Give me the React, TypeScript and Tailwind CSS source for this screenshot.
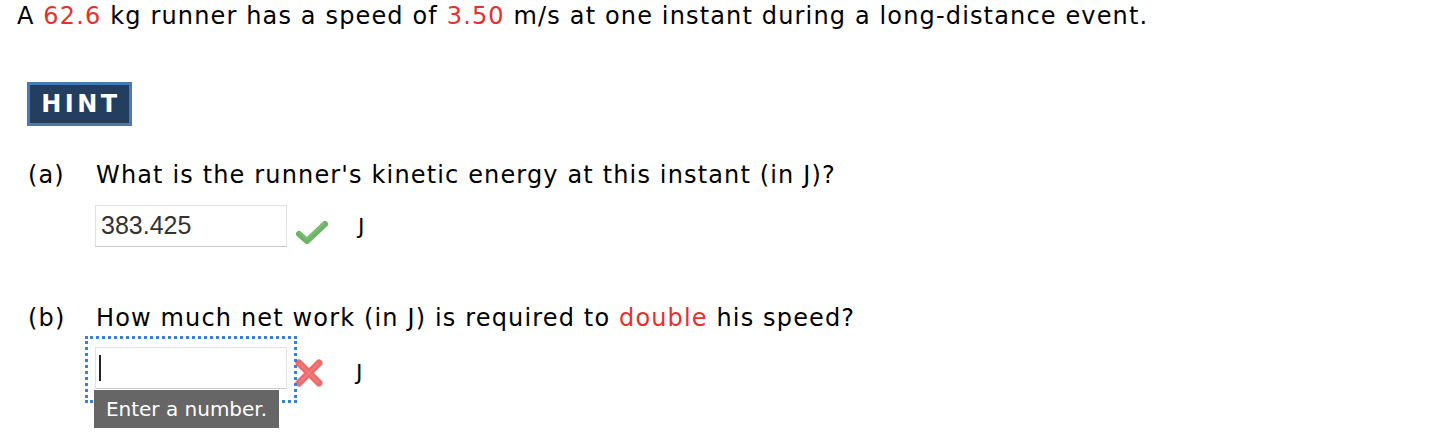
import React from "react";

const Check = () => (
  <svg width="32" height="26" viewBox="0 0 32 26">
    <path d="M3 15 L11 22 L29 5" fill="none" stroke="#6db468" strokeWidth="6" strokeLinecap="round" strokeLinejoin="round" />
    <path d="M4 14 L11 20 L28 4" fill="none" stroke="#82c57c" strokeWidth="2" strokeLinecap="round" strokeLinejoin="round" opacity="0.6" />
  </svg>
);

const Cross = () => (
  <svg width="30" height="28" viewBox="0 0 30 28">
    <path d="M5 4 L25 24 M25 4 L5 24" fill="none" stroke="#ec6b6b" strokeWidth="7" strokeLinecap="round" />
    <path d="M6 5 L24 23 M24 5 L6 23" fill="none" stroke="#f08585" strokeWidth="2" strokeLinecap="round" opacity="0.6" />
  </svg>
);

export default function App() {
  return (
    <div className="w-[1434px] h-[444px] bg-white text-black relative overflow-hidden" style={{ fontFamily: '"DejaVu Sans", Verdana, sans-serif' }}>
      <div className="pl-[17px] pt-[1px] text-[24px] leading-[30px] tracking-[1.15px]">
        A <span className="text-[#e8302a]">62.6</span> kg runner has a speed of <span className="text-[#e8302a]">3.50</span> m/s at one instant during a long-distance event.
      </div>
      <div className="pl-[27px] mt-[51px]">
        <div className="w-[105px] h-[44px] bg-[#233e5e] border-[3px] border-[#4a7ab4] flex items-center justify-center pl-[3px] text-white font-bold text-[24px] tracking-[3.5px]">
          HINT
        </div>
      </div>
      <div className="flex mt-[34px] text-[24px] leading-[30px] tracking-[1.15px]">
        <div className="w-[96px] pl-[28px]">(a)</div>
        <div>What is the runner's kinetic energy at this instant (in J)?</div>
      </div>
      <div className="flex items-center pl-[95px] mt-[15px]">
        <div className="w-[192px] h-[42px] border border-[#e2e2e2] border-b-[#c8c8c8] flex items-center pl-[5px] text-[25px] text-[#333]" style={{ fontFamily: '"Liberation Sans", Arial, sans-serif' }}>
          383.425
        </div>
        <div className="ml-[9px] mt-[12px]"><Check /></div>
        <div className="ml-[30px] text-[22px]">J</div>
      </div>
      <div className="flex mt-[56px] text-[24px] leading-[30px] tracking-[1.15px]">
        <div className="w-[96px] pl-[28px]">(b)</div>
        <div>How much net work (in J) is required to <span className="text-[#e8302a]">double</span> his speed?</div>
      </div>
      <div className="flex items-start pl-[85px] mt-[3px]">
        <div className="relative w-[212px] h-[67px] border-[3px] border-dotted border-[#3b7fdc]">
          <div className="absolute left-[7px] top-[8px] w-[192px] h-[42px] bg-white border border-[#e2e2e2] border-b-[#c8c8c8] flex items-center pl-[3px]">
            <div className="w-[2px] h-[26px] bg-[#222]" />
          </div>
        </div>
        <div className="ml-[-3px] mt-[23px]"><Cross /></div>
        <div className="ml-[32px] mt-[20px] text-[22px]">J</div>
      </div>
      <div className="absolute left-[94px] top-[390px] w-[185px] h-[38px] bg-[#666666] text-white text-[20px] flex items-center justify-center">
        Enter a number.
      </div>
    </div>
  );
}
